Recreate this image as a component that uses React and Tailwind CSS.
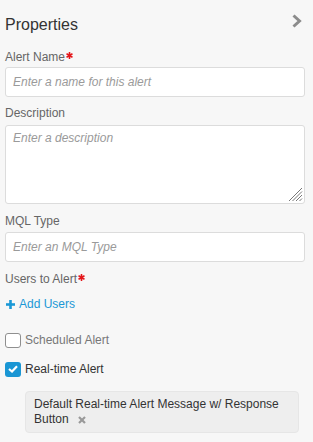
import React from 'react';

function RequiredMark() {
  return (
    <svg width="7" height="7" viewBox="0 0 10 10" className="ml-[1px] mt-[4px] shrink-0" stroke="#e4171b" strokeWidth="2.4" strokeLinecap="round">
      <line x1="5" y1="1" x2="5" y2="9" />
      <line x1="1.5" y1="3" x2="8.5" y2="7" />
      <line x1="1.5" y1="7" x2="8.5" y2="3" />
    </svg>
  );
}

function Label({ children, required, className = '' }) {
  return (
    <div className={`flex items-start text-[12px] leading-[18px] text-[#666] ${className}`}>
      <span>{children}</span>
      {required && <RequiredMark />}
    </div>
  );
}

function TextInput({ placeholder, className = '' }) {
  return (
    <input
      type="text"
      placeholder={placeholder}
      className={`block h-[30px] w-full rounded-[3px] border border-[#dcdcdc] bg-white px-[7px] text-[12px] text-[#333] outline-none placeholder:italic placeholder:text-[#9a9a9a] ${className}`}
    />
  );
}

export default function App() {
  return (
    <div className="min-h-screen w-[313px] bg-[#f7f7f7] pl-[5px] pr-[8px] pt-[14px] font-['Liberation_Sans',Arial,sans-serif]">
      <div className="flex items-start justify-between">
        <h2 className="text-[16px] leading-[22px] text-[#333]">Properties</h2>
        <svg width="10" height="14" viewBox="0 0 10 14" fill="none" stroke="#8c8c8c" strokeWidth="3" className="mr-[3px]">
          <polyline points="1.5,1.5 7.5,7 1.5,12.5" />
        </svg>
      </div>

      <Label required className="mt-[12px]">Alert Name</Label>
      <TextInput placeholder="Enter a name for this alert" className="mt-[1px]" />

      <Label className="mt-[7px]">Description</Label>
      <div className="relative mt-[3px]">
        <textarea
          placeholder="Enter a description"
          className="block h-[79px] w-full resize-none rounded-[3px] border border-[#dcdcdc] bg-white px-[7px] pt-[3px] text-[12px] leading-[18px] text-[#333] outline-none placeholder:italic placeholder:text-[#9a9a9a]"
        />
        <svg width="15" height="15" viewBox="0 0 15 15" stroke="#777" strokeWidth="1" className="pointer-events-none absolute bottom-[2px] right-[2px]">
          <line x1="1" y1="14" x2="14" y2="1" />
          <line x1="4.5" y1="14" x2="14" y2="4.5" />
          <line x1="8" y1="14" x2="14" y2="8" />
          <line x1="11.5" y1="14" x2="14" y2="11.5" />
        </svg>
      </div>

      <Label className="mt-[8px]">MQL Type</Label>
      <TextInput placeholder="Enter an MQL Type" className="mt-[2px]" />

      <Label required className="mt-[8px]">Users to Alert</Label>
      <button className="mt-[7px] flex h-[18px] items-center gap-[4px] pl-[1px] text-[12px] text-[#1b98d6]">
        <svg width="9" height="9" viewBox="0 0 9 9" stroke="#1b98d6" strokeWidth="2.6">
          <line x1="4.5" y1="0" x2="4.5" y2="9" />
          <line x1="0" y1="4.5" x2="9" y2="4.5" />
        </svg>
        <span>Add Users</span>
      </button>

      <div className="mt-[18px] flex h-[18px] items-center gap-[4px] text-[12px] text-[#777]">
        <span className="block h-[15px] w-[16px] rounded-[3px] border border-[#8f8f8f] bg-white" />
        <span>Scheduled Alert</span>
      </div>

      <div className="mt-[11px] flex h-[18px] items-center gap-[4px] text-[12px] text-[#333]">
        <span className="flex h-[15px] w-[16px] items-center justify-center rounded-[3px] bg-[#1a96d4]">
          <svg width="10" height="8" viewBox="0 0 10 8" fill="none" stroke="#fff" strokeWidth="2.2">
            <polyline points="1,4 4,6.5 9,1.2" />
          </svg>
        </span>
        <span>Real-time Alert</span>
      </div>

      <div className="ml-[20px] mr-[6px] mt-[13px] rounded-[4px] border border-[#e6e6e6] bg-[#eeeeee] px-[8px] pb-[5px] pt-[5px] text-[12px] leading-[15px] text-[#333]">
        Default Real-time Alert Message w/ Response Button
        <svg width="8" height="8" viewBox="0 0 8 8" stroke="#999" strokeWidth="2.2" className="ml-[9px] inline-block align-[-1px]">
          <line x1="1" y1="1" x2="7" y2="7" />
          <line x1="7" y1="1" x2="1" y2="7" />
        </svg>
      </div>
    </div>
  );
}
